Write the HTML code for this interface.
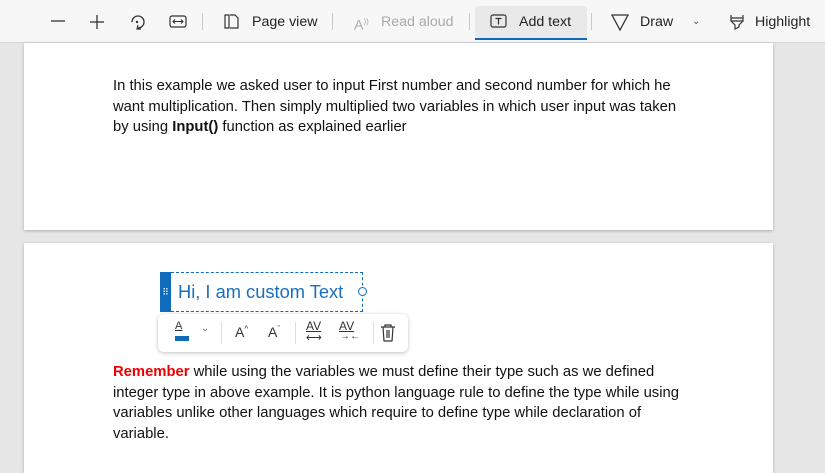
<!DOCTYPE html>
<html><head><meta charset="utf-8"><style>
body{margin:0;width:825px;height:466px;overflow:hidden;background:#e6e6e6;font-family:"Liberation Sans",sans-serif;position:relative}
.tb{position:absolute;left:0;top:0;width:825px;height:42px;background:#f7f7f7;border-bottom:1px solid #d6d6d6;color:#222;font-size:14.2px}
.tb .i{position:absolute;top:1px;height:42px;line-height:42px}
.tb svg.i{top:0}
.sep{position:absolute;top:13px;width:1px;height:17px;background:#c8c8c8}
.page{position:absolute;left:24px;width:749px;background:#fff;box-shadow:0 1px 3px rgba(0,0,0,.25)}
.p{position:absolute;left:113px;font-size:14.8px;line-height:20.6px;color:#111;width:660px;white-space:nowrap}
</style></head><body>
<div class="tb">
<svg class="i" style="left:48px" width="20" height="42"><line x1="3" y1="21" x2="17" y2="21" stroke="#333" stroke-width="1.3"/></svg>
<svg class="i" style="left:87px" width="20" height="42"><line x1="3" y1="22" x2="17" y2="22" stroke="#333" stroke-width="1.3"/><line x1="10" y1="15" x2="10" y2="29" stroke="#333" stroke-width="1.3"/></svg>
<svg class="i" style="left:127px" width="20" height="42"><path d="M5 22 A6 6 0 1 1 11 28" fill="none" stroke="#333" stroke-width="1.3"/><circle cx="10" cy="22" r="1.2" fill="#333"/><path d="M11 25 L10 29 L14 29" fill="none" stroke="#333" stroke-width="1.2"/></svg>
<svg class="i" style="left:168px" width="20" height="42"><rect x="2" y="16" width="16" height="11" rx="2" fill="none" stroke="#333" stroke-width="1.2"/><path d="M5 21.5h10M7 19.5l-2 2 2 2M13 19.5l2 2-2 2" fill="none" stroke="#333" stroke-width="1.1"/></svg>
<div class="sep" style="left:202px"></div>
<svg class="i" style="left:221px" width="20" height="42"><path d="M4 15h4v13H4zM9 15h5l3 3v10H9" fill="none" stroke="#333" stroke-width="1.2"/></svg>
<span class="i" style="left:252px">Page view</span>
<div class="sep" style="left:332px"></div>
<span class="i" style="left:354px;color:#aaa">A<sup style="font-size:8px">))</sup></span>
<span class="i" style="left:381px;color:#aaa">Read aloud</span>
<div class="sep" style="left:469px"></div>
<div style="position:absolute;left:475px;top:6px;width:112px;height:32px;background:#e9e9e9;border-radius:4px 4px 0 0;border-bottom:2px solid #0f6cbd"></div>
<svg class="i" style="left:489px" width="20" height="42"><rect x="2" y="15" width="15" height="12" rx="2" fill="none" stroke="#333" stroke-width="1.2"/><path d="M6.5 18.5h6M9.5 18.5v6" stroke="#333" stroke-width="1.2"/></svg>
<span class="i" style="left:519px">Add text</span>
<div class="sep" style="left:591px"></div>
<svg class="i" style="left:610px" width="20" height="42"><path d="M2 15h16L10 30z" fill="none" stroke="#333" stroke-width="1.3"/></svg>
<span class="i" style="left:640px">Draw</span>
<span class="i" style="left:692px;font-size:10px;color:#555">&#8964;</span>
<svg class="i" style="left:727px" width="20" height="42"><path d="M4 15v6h12v-6M4 21l4 4v4l4-2v-2l4-4M4 18h12" fill="none" stroke="#333" stroke-width="1.2"/></svg>
<span class="i" style="left:755px">Highlight</span>
</div>
<div class="page" style="top:43px;height:187px"></div>
<div class="page" style="top:243px;height:230px"></div>
<div class="p" style="top:76px">In this example we asked user to input First number and second number for which he<br>want multiplication. Then simply multiplied two variables in which user input was taken<br>by using <b>Input()</b> function as explained earlier</div>
<div style="position:absolute;left:160px;top:272px;width:11px;height:40px;background:#0f6cbd;color:#fff;font-size:9px;line-height:40px;text-align:center">⠿</div>
<div style="position:absolute;left:171px;top:272px;width:191px;height:38px;border:1px dashed #0f6cbd;border-left:none"></div>
<div style="position:absolute;left:358px;top:287px;width:7px;height:7px;border:1.3px solid #0f6cbd;border-radius:50%;background:#fff"></div>
<div style="position:absolute;left:178px;top:281px;font-size:18.3px;color:#1a6ebd">Hi, I am custom Text</div>
<div style="position:absolute;left:158px;top:314px;width:250px;height:38px;background:#fff;border-radius:6px;box-shadow:0 1px 4px rgba(0,0,0,.25);font-size:14px;color:#333">
<span style="position:absolute;left:17px;top:6px;font-size:11px;text-decoration:underline">A</span>
<div style="position:absolute;left:17px;top:22px;width:14px;height:5px;background:#0f6cbd"></div>
<span style="position:absolute;left:43px;top:9px;font-size:10px;color:#777">&#8964;</span>
<div style="position:absolute;left:63px;top:8px;width:1px;height:22px;background:#ddd"></div>
<span style="position:absolute;left:77px;top:10px">A<sup style="font-size:8px">^</sup></span>
<span style="position:absolute;left:110px;top:10px">A<sup style="font-size:8px">ˇ</sup></span>
<div style="position:absolute;left:137px;top:8px;width:1px;height:22px;background:#ddd"></div>
<span style="position:absolute;left:148px;top:5px;font-size:12px;text-decoration:underline">AV</span><span style="position:absolute;left:148px;top:17px;font-size:11px">⟷</span>
<span style="position:absolute;left:181px;top:5px;font-size:12px;text-decoration:underline">AV</span><span style="position:absolute;left:182px;top:17px;font-size:10px">→←</span>
<div style="position:absolute;left:215px;top:8px;width:1px;height:22px;background:#ddd"></div>
<svg style="position:absolute;left:221px;top:9px" width="18" height="20"><path d="M2 4h14M6 4V2h6v2M4 4l1 14h8l1-14M8 7v8M10 7v8" fill="none" stroke="#333" stroke-width="1.2"/></svg>
</div>
<div class="p" style="top:362px"><b style="color:#e00">Remember</b> while using the variables we must define their type such as we defined<br>integer type in above example. It is python language rule to define the type while using<br>variables unlike other languages which require to define type while declaration of<br>variable.</div>
</body></html>
